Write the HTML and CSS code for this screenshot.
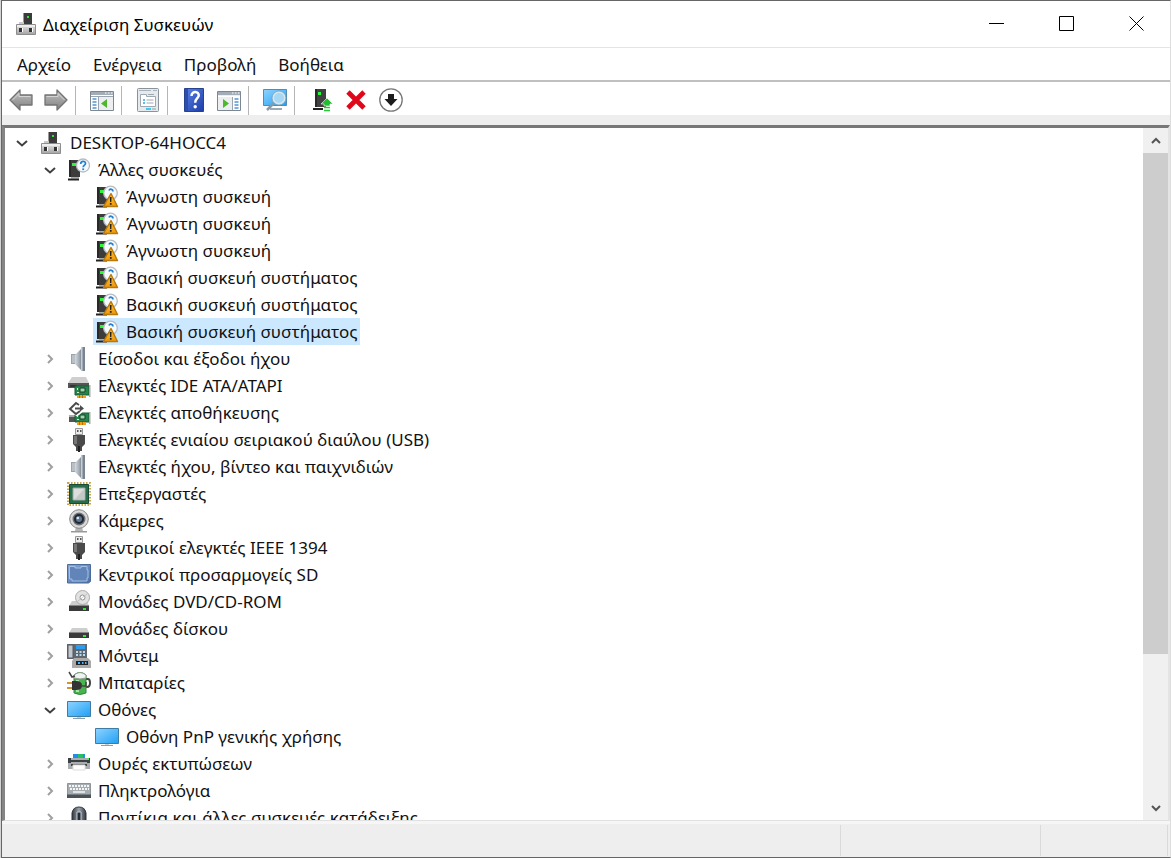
FILE: index.html
```html
<!DOCTYPE html>
<html lang="el">
<head>
<meta charset="utf-8">
<title>Διαχείριση Συσκευών</title>
<link rel="stylesheet" href="styles.css">
</head>
<body>
<svg class="sprite" aria-hidden="true">
  <defs>
    <linearGradient id="g-screen" x1="0" y1="0" x2="1" y2="1"><stop offset="0" stop-color="#8fd3ff"/><stop offset="1" stop-color="#1fa0f5"/></linearGradient>
    <linearGradient id="g-metal" x1="0" y1="0" x2="0" y2="1"><stop offset="0" stop-color="#e6e6e6"/><stop offset="1" stop-color="#a4a4a4"/></linearGradient>
    <linearGradient id="g-arrow" x1="0" y1="0" x2="0" y2="1"><stop offset="0" stop-color="#c4c4c4"/><stop offset="1" stop-color="#7e7e7e"/></linearGradient>
    <linearGradient id="g-cone" x1="0" y1="0" x2="1" y2="0"><stop offset="0" stop-color="#d5dade"/><stop offset="0.6" stop-color="#a3acb5"/><stop offset="1" stop-color="#737e89"/></linearGradient>
    <linearGradient id="g-warn" x1="0" y1="0" x2="0" y2="1"><stop offset="0" stop-color="#ffc23d"/><stop offset="1" stop-color="#ee980b"/></linearGradient>
    <linearGradient id="g-help" x1="0" y1="0" x2="1" y2="1"><stop offset="0" stop-color="#5b83e6"/><stop offset="1" stop-color="#1c3ca8"/></linearGradient>
    <linearGradient id="g-sd" x1="0" y1="0" x2="1" y2="1"><stop offset="0" stop-color="#86a6d4"/><stop offset="1" stop-color="#4c70a6"/></linearGradient>
    <linearGradient id="g-mouse" x1="0" y1="0" x2="1" y2="0"><stop offset="0" stop-color="#30363e"/><stop offset="0.5" stop-color="#9ba5b0"/><stop offset="1" stop-color="#30363e"/></linearGradient>
  </defs>
  <symbol id="i-computer" viewBox="0 0 24 24">
    <path d="M10 1h8v14h-8z" fill="#3b3b3b"/><path d="M9 1h1v10H9z" fill="#999"/><rect x="13" y="4" width="2" height="2" fill="#37e33c"/>
    <path d="M5 10h5v3H5z" fill="#c9c9c9"/>
    <path d="M2.500 12.500h19v10h-19z" fill="url(#g-metal)" stroke="#8d8d8d"/><path d="M3 13h18v2H3z" fill="#eee"/>
    <path d="M5 16h3v4H5zm10 0h3v4h-3z" fill="#333"/><path d="M8 16h1v4H8zm10 0h1v4h-1z" fill="#fff"/>
  </symbol>
  <symbol id="i-tower" viewBox="0 0 24 24">
    <path d="M2 2h11v17H2z" fill="#3c3c3c"/><path d="M2 2h2v17H2z" fill="#292929"/><rect x="5" y="5" width="4" height="3" fill="#2df53a"/>
    <path d="M4 19h8v1.500H4z" fill="#aaa"/><path d="M1 20.500h11v2H1z" fill="#222"/>
  </symbol>
  <symbol id="i-unknown" viewBox="0 0 24 24">
    <use href="#i-tower" width="24" height="24"/>
    <circle cx="16" cy="7.500" r="6.500" fill="#f6fafc" stroke="#b6bdc2" stroke-width="1.300"/>
    <path d="M13.700 6c0-3.500 5-3.300 4.800-.5-.1 1.700-2.300 1.600-2.300 3.800" fill="none" stroke="#2380d2" stroke-width="1.700"/><rect x="15.300" y="10.400" width="1.800" height="1.700" fill="#2380d2"/>
  </symbol>
  <symbol id="i-warning" viewBox="0 0 24 24">
    <use href="#i-tower" width="24" height="24"/>
    <circle cx="15.500" cy="8" r="6.800" fill="#f6fafc" stroke="#b6bdc2" stroke-width="1.300"/>
    <path d="M14 5.500c.8-2.200 4.200-1.300 4 1" fill="none" stroke="#2380d2" stroke-width="1.700"/>
    <path d="M16 8.500 22.500 21.500h-14z" fill="url(#g-warn)" stroke="#b97808" stroke-width="1.400" stroke-linejoin="round"/>
    <path d="M14.800 12h1.800l-.3 5h-1.200zM14.900 18h1.700v1.800h-1.700z" fill="#222"/>
  </symbol>
  <symbol id="i-speaker" viewBox="0 0 24 24">
    <path d="M4 7h5v10H4z" fill="#9aa3ab"/><path d="M5 8h3v8H5z" fill="#b9c1c8"/><path d="m8 8 7-7v23l-7-7z" fill="url(#g-cone)"/><path d="M14 0h4v24h-4z" fill="#78848f"/><path d="M14 0h1.500v24H14z" fill="#c7ced5"/>
  </symbol>
  <symbol id="i-card" viewBox="0 0 24 24">
    <path d="M8 12h14v9H8z" fill="#26854f" stroke="#145c34"/><path d="M22 11h1.500v12H22z" fill="#aaa"/><path d="M13 14h5v4h-5z" fill="#9ed5a9" stroke="#173f28"/><path d="M10 14h1v2h-1zm0 4h2v1h-2z" fill="#c9efb0"/><path d="M10 21h9v3h-9z" fill="#f0a11e"/><path d="M12 21h1v3h-1zm3 0h1v3h-1z" fill="#b56e00"/>
  </symbol>
  <symbol id="i-ide" viewBox="0 0 24 24">
    <path d="M5 3h14l3 6H1z" fill="#cfcfcf"/><path d="M1 9h21v5H1z" fill="#555"/><path d="M3 11h7v2H3z" fill="#333"/><use href="#i-card" width="24" height="24"/>
  </symbol>
  <symbol id="i-storage" viewBox="0 0 24 24">
    <path d="M2 15h9v6H2z" fill="#555"/><path d="M2 14h9v2H2z" fill="#aaa"/><use href="#i-card" width="24" height="24"/>
    <path d="m10 2-7 6 7 5 4-3M10 2l3 2M8 7h8M12 4l4 3-3 3" fill="none" stroke="#fff" stroke-width="4"/>
    <path d="m12 4-3-2-6 6 6 5 4-3M8 7.500h6" fill="none" stroke="#4c4c4c" stroke-width="2"/><path d="m13 4 4 3.500-4 3z" fill="#4c4c4c"/>
  </symbol>
  <symbol id="i-usb" viewBox="0 0 24 24">
    <path d="M8.500.500h7v6h-7z" fill="#ececec" stroke="#999"/><path d="M10 2h1.500v2H10zm3 0h1.500v2H13z" fill="#555"/><path d="M6 7h12v9l-3 3v4H9v-4l-3-3z" fill="#4a4a4a"/><path d="M7 8h3v8H7z" fill="#777"/><path d="M11 18h2v6h-2z" fill="#222"/>
  </symbol>
  <symbol id="i-cpu" viewBox="0 0 24 24">
    <path d="M1 1h22v22H1z" fill="none" stroke="#c9a64b" stroke-width="2" stroke-dasharray="1.500 1.500"/><path d="M2.500 2.500h19v19h-19z" fill="#286c4c" stroke="#174b34"/><path d="M6 6h12v12H6z" fill="#dcdedd" stroke="#95aaa0"/><path d="M17 7v10H8z" fill="#c4c8c6"/>
  </symbol>
  <symbol id="i-camera" viewBox="0 0 24 24">
    <path d="M9 18h6l1 4h-8z" fill="#b5b5b5"/><path d="M4 22h16v1.500H4z" fill="#999"/><circle cx="12" cy="10" r="9.300" fill="#d9d9d9" stroke="#858585"/><circle cx="12" cy="10" r="6.500" fill="#6d7177"/><circle cx="12" cy="10" r="5" fill="#25272c"/><circle cx="12" cy="10" r="3" fill="#5c7795"/><circle cx="10.800" cy="9" r="1.300" fill="#dbe9f7"/>
  </symbol>
  <symbol id="i-sd" viewBox="0 0 24 24">
    <path d="M.500 1.500h23v17l-2 1.500H.500z" fill="url(#g-sd)" stroke="#4b6b9b"/><path d="M2.500 6V3.500H8V5h6V3.500h6V7h1v8h-1v3H5v-2H2.500z" fill="#6185b9" stroke="#a4bfe5"/>
  </symbol>
  <symbol id="i-drive" viewBox="0 0 24 24">
    <path d="M5 11h15l2 5H2z" fill="#cecece"/><path d="M2 15h20v6H2z" fill="#3a3a3a"/><path d="M2 15h20v1H2z" fill="#858585"/><path d="M16 18h3v2h-3z" fill="#2bea37"/>
  </symbol>
  <symbol id="i-dvd" viewBox="0 0 24 24">
    <use href="#i-drive" width="24" height="24"/><circle cx="15.500" cy="7.500" r="7" fill="#e2e2e2" stroke="#aaa"/><circle cx="15.500" cy="7.500" r="2.500" fill="#fff" stroke="#8e8e8e"/><path d="m15.500 7.500 5-4M11 11l4.500-3.500" stroke="#b9c1c5"/>
  </symbol>
  <symbol id="i-modem" viewBox="0 0 24 24">
    <path d="M0 0h20v15H0z" fill="#62676d"/><path d="M1 1h5v13H1z" fill="#c4c8cc" stroke="#555b62"/><path d="M9 1h9v4H9z" fill="#2a9df0"/><path d="M9 7h2v2H9zm3.500 0h2v2h-2zM16 7h2v2h-2zm-7 3h2v2H9zm3.500 0h2v2h-2zM16 10h2v2h-2z" fill="#b8d9f3"/>
    <path d="M7 14h14l3 3v7H5v-7z" fill="#aaa"/><path d="M9 17h12v4H9z" fill="#222"/><path d="M11 18h2v2h-2zm4 0h1.500v2H15zm3 0h1.500v2H18z" fill="#47b6ff"/>
  </symbol>
  <symbol id="i-battery" viewBox="0 0 24 24">
    <path d="M18 8h3q2 0 2 4t-3 4h-2" fill="none" stroke="#444" stroke-width="2"/><path d="M7 4q6-5 12 0v18q-6 3-12 0z" fill="#48b44f" stroke="#368340"/><path d="M7 4q6-5 12 0v3q-6 2-12 0z" fill="#eef4ef" stroke="#8c9b8f"/><path d="M9 9h3v12H9z" fill="#a2e6a1"/><path d="M0 12h6m-6 5h6" stroke="#d1962c" stroke-width="2"/><path d="M5 10h4q6 0 6 4.500T9 19H5z" fill="#343434"/><path d="m2 1 3 5 3-1M14 15h5v-4" fill="none" stroke="#444" stroke-width="1.500"/>
  </symbol>
  <symbol id="i-monitor" viewBox="0 0 24 24">
    <path d="M.500 3.500h23v15h-23z" fill="url(#g-screen)" stroke="#3d7da5"/><path d="M10 19h4v2h-4z" fill="#c9d0d5"/><path d="M6 20h12v1H6z" fill="#8aa0ad"/>
  </symbol>
  <symbol id="i-printer" viewBox="0 0 24 24">
    <path d="M6 2h12v6H6z" fill="#278bea"/><path d="M11 2h5v4h-5z" fill="#29be62"/><path d="M1 6h22v11H1z" fill="#a9adb0"/><path d="M1 6h3v5H1zm19 0h3v5h-3zM3 8h18v2H3z" fill="#3b4045"/><path d="M4 12h16v2H4z" fill="#444"/><path d="M6 13h12v5H6z" fill="#fff" stroke="#ddd"/><rect x="20" y="6" width="2" height="2" fill="#3ff34c"/>
  </symbol>
  <symbol id="i-keyboard" viewBox="0 0 24 24">
    <path d="M.500 4.500h23v14H.500z" fill="#a5adb3" stroke="#8c949a"/><path d="M2 7h20M3 10h19" stroke="#f5f5f5" stroke-width="2" stroke-dasharray="2 1"/><path d="M6 13h12" stroke="#f5f5f5" stroke-width="1.500"/><path d="M0 15.500h24V19H0z" fill="#4b5258"/>
  </symbol>
  <symbol id="i-mouse" viewBox="0 0 24 24">
    <path d="M5 24V7q1-6 7-6t7 6v17z" fill="url(#g-mouse)" stroke="#30353a"/><path d="M10 6h4v12h-4z" fill="#282d33" stroke="#c3cad1"/>
  </symbol>
  <symbol id="i-back" viewBox="0 0 24 24">
    <path d="M1 12 11 2v5h12v10H11v5z" fill="url(#g-arrow)" stroke="#737373" stroke-width="1.300" stroke-linejoin="round"/><path d="M3.500 12 10 5.500V8.500h11.500" fill="none" stroke="#d5d5d5"/>
  </symbol>
  <symbol id="i-forward" viewBox="0 0 24 24">
    <path d="M23 12 13 2v5H1v10h12v5z" fill="url(#g-arrow)" stroke="#737373" stroke-width="1.300" stroke-linejoin="round"/><path d="M20.500 12 14 5.500V8.500H2.500" fill="none" stroke="#d5d5d5"/>
  </symbol>
  <symbol id="i-console" viewBox="0 0 24 24">
    <path d="M.500 3.500h23v19H.500z" fill="#fff" stroke="#7c8793"/><path d="M1 4h22v3H1z" fill="#a3adb8"/><path d="M15 5h1.500m1.500 0h1.500M21 5h1.500" stroke="#fff"/><path d="M1 8.500h22M8.500 9v13" stroke="#9aa5b0"/><path d="M9 9h14v13H9z" fill="#eceef0"/><path d="M2.500 11h4m-4 3h4m-4 3h4m-4 3h4" stroke="#4f96d4" stroke-width="1.500"/><path d="M17 11v9l-6-4.500z" fill="#4cb82d"/>
  </symbol>
  <symbol id="i-action" viewBox="0 0 24 24">
    <path d="M.500 3.500h23v19H.500z" fill="#eceef0" stroke="#7c8793"/><path d="M1 4h22v3H1z" fill="#a3adb8"/><path d="M15 5h1.500m1.500 0h1.500M21 5h1.500" stroke="#fff"/><path d="M1 8.500h22" stroke="#fff"/><path d="M16 9h7v13h-7z" fill="#fff"/><path d="M15.500 9v13" stroke="#9aa5b0"/><path d="M17.500 11h4m-4 3h4m-4 3h4m-4 3h4" stroke="#4f96d4" stroke-width="1.500"/><path d="M6 11v9l6-4.500z" fill="#4cb82d"/>
  </symbol>
  <symbol id="i-props" viewBox="0 0 24 24">
    <rect x="1.500" y=".500" width="21" height="23" rx="1" fill="#e7eaed" stroke="#8a939c"/><path d="M3 2.500h12m2 0h4" stroke="#a9b2ba"/><path d="M4.500 6.500h6v2h9v10h-15z" fill="#fff" stroke="#9ea8b2"/><path d="M12 6.500h6" stroke="#9ea8b2"/><path d="M7 12h2m-2 3h2" stroke="#2aa9de" stroke-width="1.500"/><path d="M10.500 12h7m-7 3h7" stroke="#a0a9b1"/><path d="M10 20h5v2h-5z" fill="#40c8ef"/><path d="M16 20h4v2h-4z" fill="#bcc4cb"/>
  </symbol>
  <symbol id="i-help" viewBox="0 0 24 24">
    <path d="M2.500.500h19v23h-19z" fill="url(#g-help)" stroke="#28428f"/><path d="M3 1h3v22H3z" fill="#2c4fae"/><path d="M9.500 8c.2-5.500 8-4.800 7.200-.2-.5 2.800-3.700 3-3.500 7" fill="none" stroke="#fff" stroke-width="2.500"/><circle cx="13.200" cy="18.700" r="1.700" fill="#fff"/>
  </symbol>
  <symbol id="i-scan" viewBox="0 0 24 24">
    <path d="M.500 1.500h23v16h-23z" fill="url(#g-screen)" stroke="#4e8db7"/><path d="M7 20h12v2H7z" fill="#9babb5"/><path d="m12 14-8 8" stroke="#8999a5" stroke-width="2.500"/><circle cx="16" cy="10" r="6" fill="#a6d8f4" stroke="#d7e5ee" stroke-width="2"/><circle cx="16" cy="10" r="7" fill="none" stroke="#6f9ab6" stroke-width=".700"/>
  </symbol>
  <symbol id="i-update" viewBox="-2 0 24 24">
    <path d="M4 1h11v18H4z" fill="#414141"/><path d="M4 1h2v18H4z" fill="#292929"/><rect x="7" y="4" width="3" height="3" fill="#2df53a"/><path d="M2 20h10v2H2z" fill="#222"/><path d="m16 10 6 6h-3v2h-6v-2h-3z" fill="#24bd31" stroke="#fff" stroke-width=".600"/><path d="M13 19.500h6M13 22.500h6" stroke="#27c934" stroke-width="1.700"/>
  </symbol>
  <symbol id="i-delete" viewBox="0 0 24 24"><path d="m4 4 16 16M20 4 4 20" stroke="#df0719" stroke-width="4.800"/></symbol>
  <symbol id="i-disable" viewBox="0 0 24 24">
    <circle cx="12" cy="12" r="11.200" fill="#fff" stroke="#777" stroke-width="1.300"/><path d="M9 6h6v5h3.500L12 18l-6.500-7H9z" fill="#1c1c1c"/>
  </symbol>
  <symbol id="i-chevron" viewBox="0 0 16 16"><path d="m6 4 4 4-4 4" fill="none" stroke="currentColor" stroke-width="2"/></symbol>
  <symbol id="i-open" viewBox="0 0 16 16"><path d="m3 6 5 4.500L13 6" fill="none" stroke="currentColor" stroke-width="2"/></symbol>
</svg>

<div class="window">
  <header class="titlebar">
    <svg class="icon app-icon"><use href="#i-computer"/></svg>
    <h1 class="title">Διαχείριση Συσκευών</h1>
    <div class="controls">
      <button class="control" aria-label="Ελαχιστοποίηση"><svg class="glyph" viewBox="0 0 16 16"><path d="M0 7.500h15"/></svg></button>
      <button class="control" aria-label="Μεγιστοποίηση"><svg class="glyph" viewBox="0 0 16 16"><path d="M.500.500h14v14H.500z"/></svg></button>
      <button class="control" aria-label="Κλείσιμο"><svg class="glyph" viewBox="0 0 16 16"><path d="m.500.500 14 14m0-14-14 14"/></svg></button>
    </div>
  </header>
  <nav class="menubar">
    <button class="menu">Αρχείο</button>
    <button class="menu">Ενέργεια</button>
    <button class="menu">Προβολή</button>
    <button class="menu">Βοήθεια</button>
  </nav>
  <div class="toolbar" role="toolbar">
    <div class="group"><button class="tool" aria-label="Πίσω"><svg class="icon"><use href="#i-back"/></svg></button><button class="tool" aria-label="Εμπρός"><svg class="icon"><use href="#i-forward"/></svg></button></div>
    <div class="group"><button class="tool" aria-label="Δέντρο κονσόλας"><svg class="icon"><use href="#i-console"/></svg></button></div>
    <div class="group"><button class="tool" aria-label="Ιδιότητες"><svg class="icon"><use href="#i-props"/></svg></button></div>
    <div class="group"><button class="tool" aria-label="Βοήθεια"><svg class="icon"><use href="#i-help"/></svg></button><button class="tool" aria-label="Παράθυρο ενεργειών"><svg class="icon"><use href="#i-action"/></svg></button></div>
    <div class="group"><button class="tool" aria-label="Σάρωση για αλλαγές υλικού"><svg class="icon"><use href="#i-scan"/></svg></button></div>
    <div class="group"><button class="tool" aria-label="Ενημέρωση"><svg class="icon"><use href="#i-update"/></svg></button><button class="tool" aria-label="Κατάργηση"><svg class="icon"><use href="#i-delete"/></svg></button><button class="tool" aria-label="Απενεργοποίηση"><svg class="icon"><use href="#i-disable"/></svg></button></div>
  </div>
  <main class="pane">
    <div class="viewport">
      <ul class="tree" role="tree">
        <li>
          <div class="row"><button class="toggle open" aria-label="Σύμπτυξη"><svg class="chevron"><use href="#i-open"/></svg></button><span class="label"><svg class="icon"><use href="#i-computer"/></svg>DESKTOP-64HOCC4</span></div>
          <ul class="branch" role="group">
            <li>
              <div class="row"><button class="toggle open" aria-label="Σύμπτυξη"><svg class="chevron"><use href="#i-open"/></svg></button><span class="label"><svg class="icon"><use href="#i-unknown"/></svg>Άλλες συσκευές</span></div>
              <ul class="branch" role="group">
                <li class="row leaf"><span class="label"><svg class="icon"><use href="#i-warning"/></svg>Άγνωστη συσκευή</span></li>
                <li class="row leaf"><span class="label"><svg class="icon"><use href="#i-warning"/></svg>Άγνωστη συσκευή</span></li>
                <li class="row leaf"><span class="label"><svg class="icon"><use href="#i-warning"/></svg>Άγνωστη συσκευή</span></li>
                <li class="row leaf"><span class="label"><svg class="icon"><use href="#i-warning"/></svg>Βασική συσκευή συστήματος</span></li>
                <li class="row leaf"><span class="label"><svg class="icon"><use href="#i-warning"/></svg>Βασική συσκευή συστήματος</span></li>
                <li class="row leaf"><span class="label selected"><svg class="icon"><use href="#i-warning"/></svg>Βασική συσκευή συστήματος</span></li>
              </ul>
            </li>
            <li class="row"><button class="toggle" aria-label="Ανάπτυξη"><svg class="chevron"><use href="#i-chevron"/></svg></button><span class="label"><svg class="icon"><use href="#i-speaker"/></svg>Είσοδοι και έξοδοι ήχου</span></li>
            <li class="row"><button class="toggle" aria-label="Ανάπτυξη"><svg class="chevron"><use href="#i-chevron"/></svg></button><span class="label"><svg class="icon"><use href="#i-ide"/></svg>Ελεγκτές IDE ATA/ATAPI</span></li>
            <li class="row"><button class="toggle" aria-label="Ανάπτυξη"><svg class="chevron"><use href="#i-chevron"/></svg></button><span class="label"><svg class="icon"><use href="#i-storage"/></svg>Ελεγκτές αποθήκευσης</span></li>
            <li class="row"><button class="toggle" aria-label="Ανάπτυξη"><svg class="chevron"><use href="#i-chevron"/></svg></button><span class="label"><svg class="icon"><use href="#i-usb"/></svg>Ελεγκτές ενιαίου σειριακού διαύλου (USB)</span></li>
            <li class="row"><button class="toggle" aria-label="Ανάπτυξη"><svg class="chevron"><use href="#i-chevron"/></svg></button><span class="label"><svg class="icon"><use href="#i-speaker"/></svg>Ελεγκτές ήχου, βίντεο και παιχνιδιών</span></li>
            <li class="row"><button class="toggle" aria-label="Ανάπτυξη"><svg class="chevron"><use href="#i-chevron"/></svg></button><span class="label"><svg class="icon"><use href="#i-cpu"/></svg>Επεξεργαστές</span></li>
            <li class="row"><button class="toggle" aria-label="Ανάπτυξη"><svg class="chevron"><use href="#i-chevron"/></svg></button><span class="label"><svg class="icon"><use href="#i-camera"/></svg>Κάμερες</span></li>
            <li class="row"><button class="toggle" aria-label="Ανάπτυξη"><svg class="chevron"><use href="#i-chevron"/></svg></button><span class="label"><svg class="icon"><use href="#i-usb"/></svg>Κεντρικοί ελεγκτές IEEE 1394</span></li>
            <li class="row"><button class="toggle" aria-label="Ανάπτυξη"><svg class="chevron"><use href="#i-chevron"/></svg></button><span class="label"><svg class="icon"><use href="#i-sd"/></svg>Κεντρικοί προσαρμογείς SD</span></li>
            <li class="row"><button class="toggle" aria-label="Ανάπτυξη"><svg class="chevron"><use href="#i-chevron"/></svg></button><span class="label"><svg class="icon"><use href="#i-dvd"/></svg>Μονάδες DVD/CD-ROM</span></li>
            <li class="row"><button class="toggle" aria-label="Ανάπτυξη"><svg class="chevron"><use href="#i-chevron"/></svg></button><span class="label"><svg class="icon"><use href="#i-drive"/></svg>Μονάδες δίσκου</span></li>
            <li class="row"><button class="toggle" aria-label="Ανάπτυξη"><svg class="chevron"><use href="#i-chevron"/></svg></button><span class="label"><svg class="icon"><use href="#i-modem"/></svg>Μόντεμ</span></li>
            <li class="row"><button class="toggle" aria-label="Ανάπτυξη"><svg class="chevron"><use href="#i-chevron"/></svg></button><span class="label"><svg class="icon"><use href="#i-battery"/></svg>Μπαταρίες</span></li>
            <li>
              <div class="row"><button class="toggle open" aria-label="Σύμπτυξη"><svg class="chevron"><use href="#i-open"/></svg></button><span class="label"><svg class="icon"><use href="#i-monitor"/></svg>Οθόνες</span></div>
              <ul class="branch" role="group">
                <li class="row leaf"><span class="label"><svg class="icon"><use href="#i-monitor"/></svg>Οθόνη PnP γενικής χρήσης</span></li>
              </ul>
            </li>
            <li class="row"><button class="toggle" aria-label="Ανάπτυξη"><svg class="chevron"><use href="#i-chevron"/></svg></button><span class="label"><svg class="icon"><use href="#i-printer"/></svg>Ουρές εκτυπώσεων</span></li>
            <li class="row"><button class="toggle" aria-label="Ανάπτυξη"><svg class="chevron"><use href="#i-chevron"/></svg></button><span class="label"><svg class="icon"><use href="#i-keyboard"/></svg>Πληκτρολόγια</span></li>
            <li class="row"><button class="toggle" aria-label="Ανάπτυξη"><svg class="chevron"><use href="#i-chevron"/></svg></button><span class="label"><svg class="icon"><use href="#i-mouse"/></svg>Ποντίκια και άλλες συσκευές κατάδειξης</span></li>
          </ul>
        </li>
      </ul>
    </div>
    <div class="scrollbar">
      <button class="scroll-button" aria-label="Κύλιση επάνω"><svg class="scroll-glyph" viewBox="0 0 16 16"><path d="m4 10 4-4 4 4"/></svg></button>
      <div class="track"><div class="thumb"></div></div>
      <button class="scroll-button" aria-label="Κύλιση κάτω"><svg class="scroll-glyph" viewBox="0 0 16 16"><path d="m4 6 4 4 4-4"/></svg></button>
    </div>
  </main>
  <footer class="statusbar"><div class="status main-status"></div><div class="status"></div><div class="status last-status"></div></footer>
</div>
</body>
</html>
```
FILE: styles.css
```css
* { box-sizing: border-box; }
body {
  margin: 0;
  background: #d4d4d4;
  color: #111;
  font-family: "Noto Sans", "Open Sans", sans-serif;
  font-size: 17px;
}
button {
  margin: 0;
  padding: 0;
  border: 0;
  background: none;
  color: inherit;
  font: inherit;
}
.sprite { position: absolute; width: 0; height: 0; }
.icon { flex: none; width: 24px; height: 24px; }
.window {
  display: flex;
  flex-direction: column;
  height: 100vh;
  margin-left: 1px;
  border: 1px solid #666;
  border-right-color: #ddd;
  background: #fff;
}
.titlebar {
  display: flex;
  align-items: center;
  height: 47px;
  flex: none;
  padding-left: 12px;
  border-bottom: 1px solid #e4e4e4;
}
.title { flex: 1; margin: 0 0 0 5px; font-size: 17px; font-weight: 400; color: #000; }
.controls { display: flex; gap: 4px; align-self: stretch; }
.control { display: flex; align-items: center; justify-content: center; width: 66px; }
.glyph { width: 16px; height: 16px; fill: none; stroke: #000; }
.menubar {
  display: flex;
  flex: none;
  height: 34px;
  padding-left: 4px;
  border-bottom: 2px solid #c0c0c0;
}
.menu { padding: 0 11px; }
.toolbar {
  display: flex;
  flex: none;
  align-items: center;
  height: 43px;
  padding: 3px 0 0;
  border-bottom: 10px solid #eee;
}
.group { display: flex; align-items: center; gap: 11px; height: 29px; padding: 0 7px 0 14px; }
.group:first-child { padding-left: 7px; }
.group + .group { border-left: 1px solid #b5b5b5; }
.tool { display: flex; }
.pane {
  display: flex;
  flex: 1;
  min-height: 0;
  border-left: 3px solid #858585;
  border-top: 3px solid #777;
  border-right: 2px solid #e4e4e4;
  border-bottom: 1px solid #e0e0e0;
}
.viewport { flex: 1; overflow: hidden; }
.tree, .branch { margin: 0; padding: 0; list-style: none; }
.tree { padding: 1px 0 0 9px; }
.branch { padding-left: 28px; }
.row { display: flex; align-items: center; height: 27px; white-space: nowrap; }
.toggle { display: flex; width: 16px; margin-right: 7px; color: #a0a0a0; }
.toggle.open { color: #404040; }
.chevron { width: 16px; height: 16px; }
.leaf { padding-left: 23px; }
.label { display: flex; align-items: center; gap: 7px; height: 27px; padding: 0 2px; }
.selected { background: #cce8ff; }
.scrollbar { display: flex; flex-direction: column; width: 25px; background: #f0f0f0; }
.scroll-button { display: flex; align-items: center; justify-content: center; height: 25px; }
.scroll-glyph { width: 16px; height: 16px; fill: none; stroke: #555; stroke-width: 2; }
.track { flex: 1; }
.thumb { height: 78%; background: #cdcdcd; }
.statusbar {
  display: flex;
  flex: none;
  height: 36px;
  padding: 1px 2px 1px 0;
  border-top: 3px solid #f6f6f6;
  background: #eee;
}
.status { width: 200px; border-right: 1px solid #dadada; }
.main-status { flex: 1; }
.last-status { width: 127px; }
```
